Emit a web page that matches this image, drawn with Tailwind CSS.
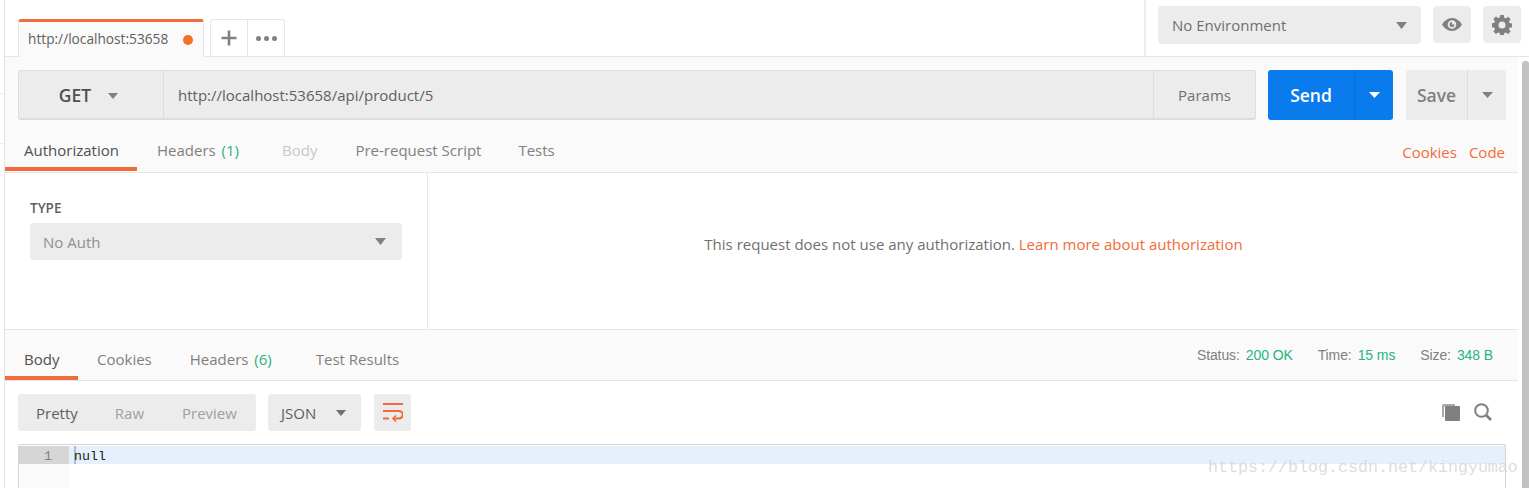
<!DOCTYPE html>
<html lang="en">
  <head>
    <meta charset="UTF-8" />
    <title>Postman</title>
    <script src="https://cdn.jsdelivr.net/npm/@tailwindcss/browser@4"></script>
  </head>

  <body>
    <div class="relative w-[1529px] h-[488px] overflow-hidden bg-white flex font-['Open_Sans',sans-serif] text-[#505050]">
      <!-- sidebar edge -->
      <div class="w-[5px] h-full shrink-0 flex">
        <div class="w-[4px] h-full bg-white flex flex-col">
          <div class="mt-[93px] h-px bg-[#eeeeee]"></div>
          <div class="mt-[49px] h-px bg-[#eeeeee]"></div>
        </div>
        <div class="w-[1px] h-full bg-[#e4e4e4]"></div>
      </div>

      <div class="w-[1524px] shrink-0 flex flex-col">
        <!-- tab bar -->
        <div class="h-[57px] shrink-0 flex border-b border-[#e6e6e6] pl-[13px]">
          <div class="flex items-end pt-[19px]">
            <div class="w-[186px] h-[38px] -mb-px border-t-[3px] border-[#f26b3a] border-x border-x-[#e6e6e6] rounded-t-[3px] bg-[#fafafa] flex items-center justify-between pl-[9px] pr-[10px]">
              <span class="text-[13.700px] text-[#606060] whitespace-nowrap">http://localhost:53658</span>
              <span class="w-[10px] h-[10px] rounded-full bg-[#f47023]"></span>
            </div>
            <div class="ml-[6px] w-[75px] h-[37px] border border-b-0 border-[#e6e6e6] rounded-t-[3px] flex">
              <div class="w-[37px] flex items-center justify-center border-r border-[#e6e6e6]">
                <svg width="16" height="16" viewBox="0 0 16 16"><path d="M8 0.500v15M0.500 8h15" stroke="#808080" stroke-width="2.600" /></svg>
              </div>
              <div class="flex-1 flex items-center justify-center gap-[3px]">
                <span class="w-[5px] h-[5px] rounded-full bg-[#808080]"></span>
                <span class="w-[5px] h-[5px] rounded-full bg-[#808080]"></span>
                <span class="w-[5px] h-[5px] rounded-full bg-[#808080]"></span>
              </div>
            </div>
          </div>
          <div class="ml-auto flex h-full border-l-2 border-[#eeeeee] pl-[12px] pr-[8px]">
            <div class="mt-[6px] w-[263px] h-[38px] rounded-[4px] bg-[#ececec] flex items-center justify-between pl-[14px] pr-[14px]">
              <span class="text-[15px] text-[#707070]">No Environment</span>
              <svg width="11" height="7" viewBox="0 0 11 7"><path d="M0 0h11L5.500 7z" fill="#808080" /></svg>
            </div>
            <div class="mt-[6px] ml-[12px] w-[38px] h-[37px] rounded-[4px] bg-[#ececec] flex items-center justify-center">
              <svg width="20" height="13" viewBox="0 0 20 13">
                <path fill-rule="evenodd" d="M10 0C5.500 0 2 3 0 6.500 2 10 5.500 13 10 13s8-3 10-6.500C18 3 14.500 0 10 0zm0 2.200a4.300 4.300 0 1 1 0 8.600 4.300 4.300 0 0 1 0-8.600z" fill="#808080" />
                <path d="M10 4a2.500 2.500 0 1 0 2.500 2.500H10z" fill="#808080" />
              </svg>
            </div>
            <div class="mt-[6px] ml-[12px] w-[38px] h-[37px] rounded-[4px] bg-[#ececec] flex items-center justify-center">
              <svg width="20" height="20" viewBox="0 0 20 20">
                <path fill-rule="evenodd" d="M8.200 0h3.600l.5 2.800 1.500.6 2.300-1.600 2.500 2.500-1.600 2.300.6 1.500 2.800.5v3.600l-2.800.5-.6 1.500 1.600 2.300-2.500 2.500-2.300-1.600-1.500.6-.5 2.800H8.200l-.5-2.800-1.500-.6-2.300 1.600-2.500-2.500 1.600-2.300-.6-1.500-2.800-.5V8.200l2.800-.5.6-1.500-1.600-2.300 2.500-2.500 2.300 1.600 1.500-.6zM10 6.500a3.500 3.500 0 1 0 0 7 3.500 3.500 0 0 0 0-7z" fill="#808080" />
              </svg>
            </div>
          </div>
        </div>

        <div class="flex-1 flex min-h-0">
          <div class="w-[1513px] shrink-0 flex flex-col">
            <!-- request -->
            <div class="h-[116px] shrink-0 bg-[#fafafa] border-b border-[#e6e6e6] flex flex-col">
              <div class="h-[50px] mt-[13px] flex pl-[13px] pr-[12px]">
                <div class="w-[1238px] h-full flex rounded-[3px] border border-[#dcdcdc] border-b-2 bg-[#ececec]">
                  <div class="w-[145px] flex items-center justify-center gap-[17px] border-r border-[#dcdcdc] pr-[5px] pt-[2px]">
                    <span class="text-[17.500px] font-semibold text-[#505050]">GET</span>
                    <svg width="10" height="6" viewBox="0 0 10 6"><path d="M0 0h10L5 6z" fill="#808080" /></svg>
                  </div>
                  <div class="flex-1 flex items-center pl-[14px] pt-[2px] text-[15px] text-[#606060]">http://localhost:53658/api/product/5</div>
                  <div class="w-[102px] flex items-center justify-center border-l border-[#dcdcdc] pt-[2px] text-[15px] text-[#707070]">Params</div>
                </div>
                <div class="ml-[12px] w-[125px] h-full flex rounded-[3px] bg-[#097bed] text-white">
                  <div class="flex-1 flex items-center justify-center text-[17.500px] font-semibold">Send</div>
                  <div class="w-[39px] flex items-center justify-center border-l border-[#0a6fd4]">
                    <svg width="11" height="6" viewBox="0 0 11 6"><path d="M0 0h11L5.500 6z" fill="#ffffff" /></svg>
                  </div>
                </div>
                <div class="ml-[13px] w-[100px] h-full flex rounded-[3px] bg-[#ececec]">
                  <div class="flex-1 flex items-center justify-center text-[17.500px] font-semibold text-[#808080]">Save</div>
                  <div class="w-[39px] flex items-center justify-center border-l border-[#dcdcdc]">
                    <svg width="11" height="6" viewBox="0 0 11 6"><path d="M0 0h11L5.500 6z" fill="#808080" /></svg>
                  </div>
                </div>
              </div>
              <div class="mt-[13px] h-[38px] flex text-[15px] text-[#808080]">
                <div class="w-[132px] h-full border-b-4 border-[#f26b3a] pl-[19px] pt-[6px] text-[#505050]">Authorization</div>
                <div class="ml-[20px] pt-[6px]">Headers <span class="ml-[2px] text-[#26b47f]">(1)</span></div>
                <div class="ml-[43px] pt-[6px] text-[#c8c8c8]">Body</div>
                <div class="ml-[38px] pt-[6px]">Pre-request Script</div>
                <div class="ml-[37px] pt-[6px]">Tests</div>
                <div class="ml-auto pt-[8px] pr-[13px] text-[#f26b3a] flex gap-[12px]">
                  <span>Cookies</span>
                  <span>Code</span>
                </div>
              </div>
            </div>

            <!-- auth -->
            <div class="h-[157px] shrink-0 flex border-b border-[#e6e6e6]">
              <div class="w-[423px] shrink-0 border-r border-[#e6e6e6] pl-[25px] pt-[26px]">
                <div class="text-[13.500px] font-semibold leading-[18px] text-[#606060]">TYPE</div>
                <div class="mt-[6px] w-[372px] h-[37px] rounded-[3px] bg-[#ececec] flex items-center justify-between pl-[13px] pr-[16px]">
                  <span class="pt-[2px] text-[15px] text-[#909090]">No Auth</span>
                  <svg width="11" height="7" viewBox="0 0 11 7"><path d="M0 0h11L5.500 7z" fill="#808080" /></svg>
                </div>
              </div>
              <div class="flex-1 flex items-center justify-center text-[15px] text-[#707070] pb-[13px] pl-[1px]">
                <span>This request does not use any authorization. <span class="text-[#f26b3a]">Learn more about authorization</span></span>
              </div>
            </div>

            <!-- response -->
            <div class="h-[51px] shrink-0 bg-[#fafafa] border-b border-[#e6e6e6] flex text-[15px] text-[#808080]">
              <div class="w-[73px] h-[50px] border-b-4 border-[#f26b3a] pl-[19px] pt-[18px] text-[#505050]">Body</div>
              <div class="ml-[19px] pt-[18px]">Cookies</div>
              <div class="ml-[38px] pt-[18px]">Headers <span class="ml-[2px] text-[#26b47f]">(6)</span></div>
              <div class="ml-[44px] pt-[18px]">Test Results</div>
              <div class="ml-auto pr-[25px] pt-[17px] flex font-['Liberation_Sans',sans-serif] text-[14px] leading-[16px] tracking-[-0.100px]">
                <span>Status:</span><span class="ml-[6px] text-[#26b47f]">200 OK</span>
                <span class="ml-[25px]">Time:</span><span class="ml-[6px] text-[#26b47f]">15 ms</span>
                <span class="ml-[25px]">Size:</span><span class="ml-[6px] text-[#26b47f]">348 B</span>
              </div>
            </div>

            <!-- response toolbar -->
            <div class="h-[63px] shrink-0 flex items-start pl-[13px] pr-[26px] pt-[13px]">
              <div class="w-[238px] h-[37px] rounded-[3px] bg-[#ececec] flex items-center pt-[2px] text-[15px] text-[#a0a0a0]">
                <span class="ml-[18px] text-[#606060]">Pretty</span>
                <span class="ml-[37px]">Raw</span>
                <span class="ml-[38px]">Preview</span>
              </div>
              <div class="ml-[12px] w-[93px] h-[37px] rounded-[3px] bg-[#ececec] flex items-center justify-between pl-[13px] pr-[15px] text-[15px] text-[#606060]">
                <span class="pt-[2px]">JSON</span>
                <svg width="10" height="6" viewBox="0 0 10 6"><path d="M0 0h10L5 6z" fill="#707070" /></svg>
              </div>
              <div class="ml-[13px] w-[37px] h-[37px] rounded-[3px] bg-[#ececec] flex items-center justify-center">
                <svg width="20" height="19" viewBox="0 0 20 19" fill="none" stroke="#f26b3a" stroke-width="2.200">
                  <path d="M0 1h20M0 8h16a3.700 3.700 0 0 1 0 7.500H10M0 15.500h6" />
                  <path d="M13 12.500l-3 3 3 3" stroke-width="1.600" />
                </svg>
              </div>
              <div class="ml-auto mt-[9px] flex items-center gap-[14px]">
                <svg width="18" height="18" viewBox="0 0 18 18">
                  <path d="M2 1h11v2H4a2 2 0 0 0-2 2v9H0V3a2 2 0 0 1 2-2z" fill="#a8a8a8" />
                  <rect x="3" y="3" width="15" height="15" rx="1" fill="#808080" />
                </svg>
                <svg width="18" height="18" viewBox="0 0 18 18" fill="none" stroke="#808080">
                  <circle cx="7.500" cy="7.500" r="6.300" stroke-width="2" />
                  <path d="M12 12l5 5" stroke-width="2.600" />
                </svg>
              </div>
            </div>

            <!-- editor -->
            <div class="ml-[13px] w-[1488px] flex-1 border border-b-0 border-[#d4d4d4] rounded-t-[3px] pt-[1px] flex font-['Liberation_Mono',monospace] text-[13.300px] leading-[22px]">
              <div class="w-[50px] h-full shrink-0 bg-[#fafafa]">
                <div class="h-[18px] bg-[#d6d6d6] text-right pr-[17px] text-[#808080]">1</div>
              </div>
              <div class="flex-1 h-[18px] bg-[#e6f0fb] flex pl-[5px] text-[#222222]">
                <span class="w-[2px] -mr-[2px] h-full bg-[#a9bdd3]"></span>
                <span>null</span>
              </div>
            </div>
          </div>

          <!-- scrollbar -->
          <div class="ml-[4px] w-[7px] h-full shrink-0 pt-[4px]">
            <div class="h-full bg-[#c2c2c2] rounded-t-[3px]"></div>
          </div>
        </div>
      </div>

      <!-- watermark -->
      <div class="absolute left-[1208px] top-[458px] font-['Liberation_Mono',monospace] text-[16.670px] leading-[20px] whitespace-nowrap text-[#d4d4d4]/80">https://blog.csdn.net/kingyumao</div>
    </div>
  </body>
</html>
